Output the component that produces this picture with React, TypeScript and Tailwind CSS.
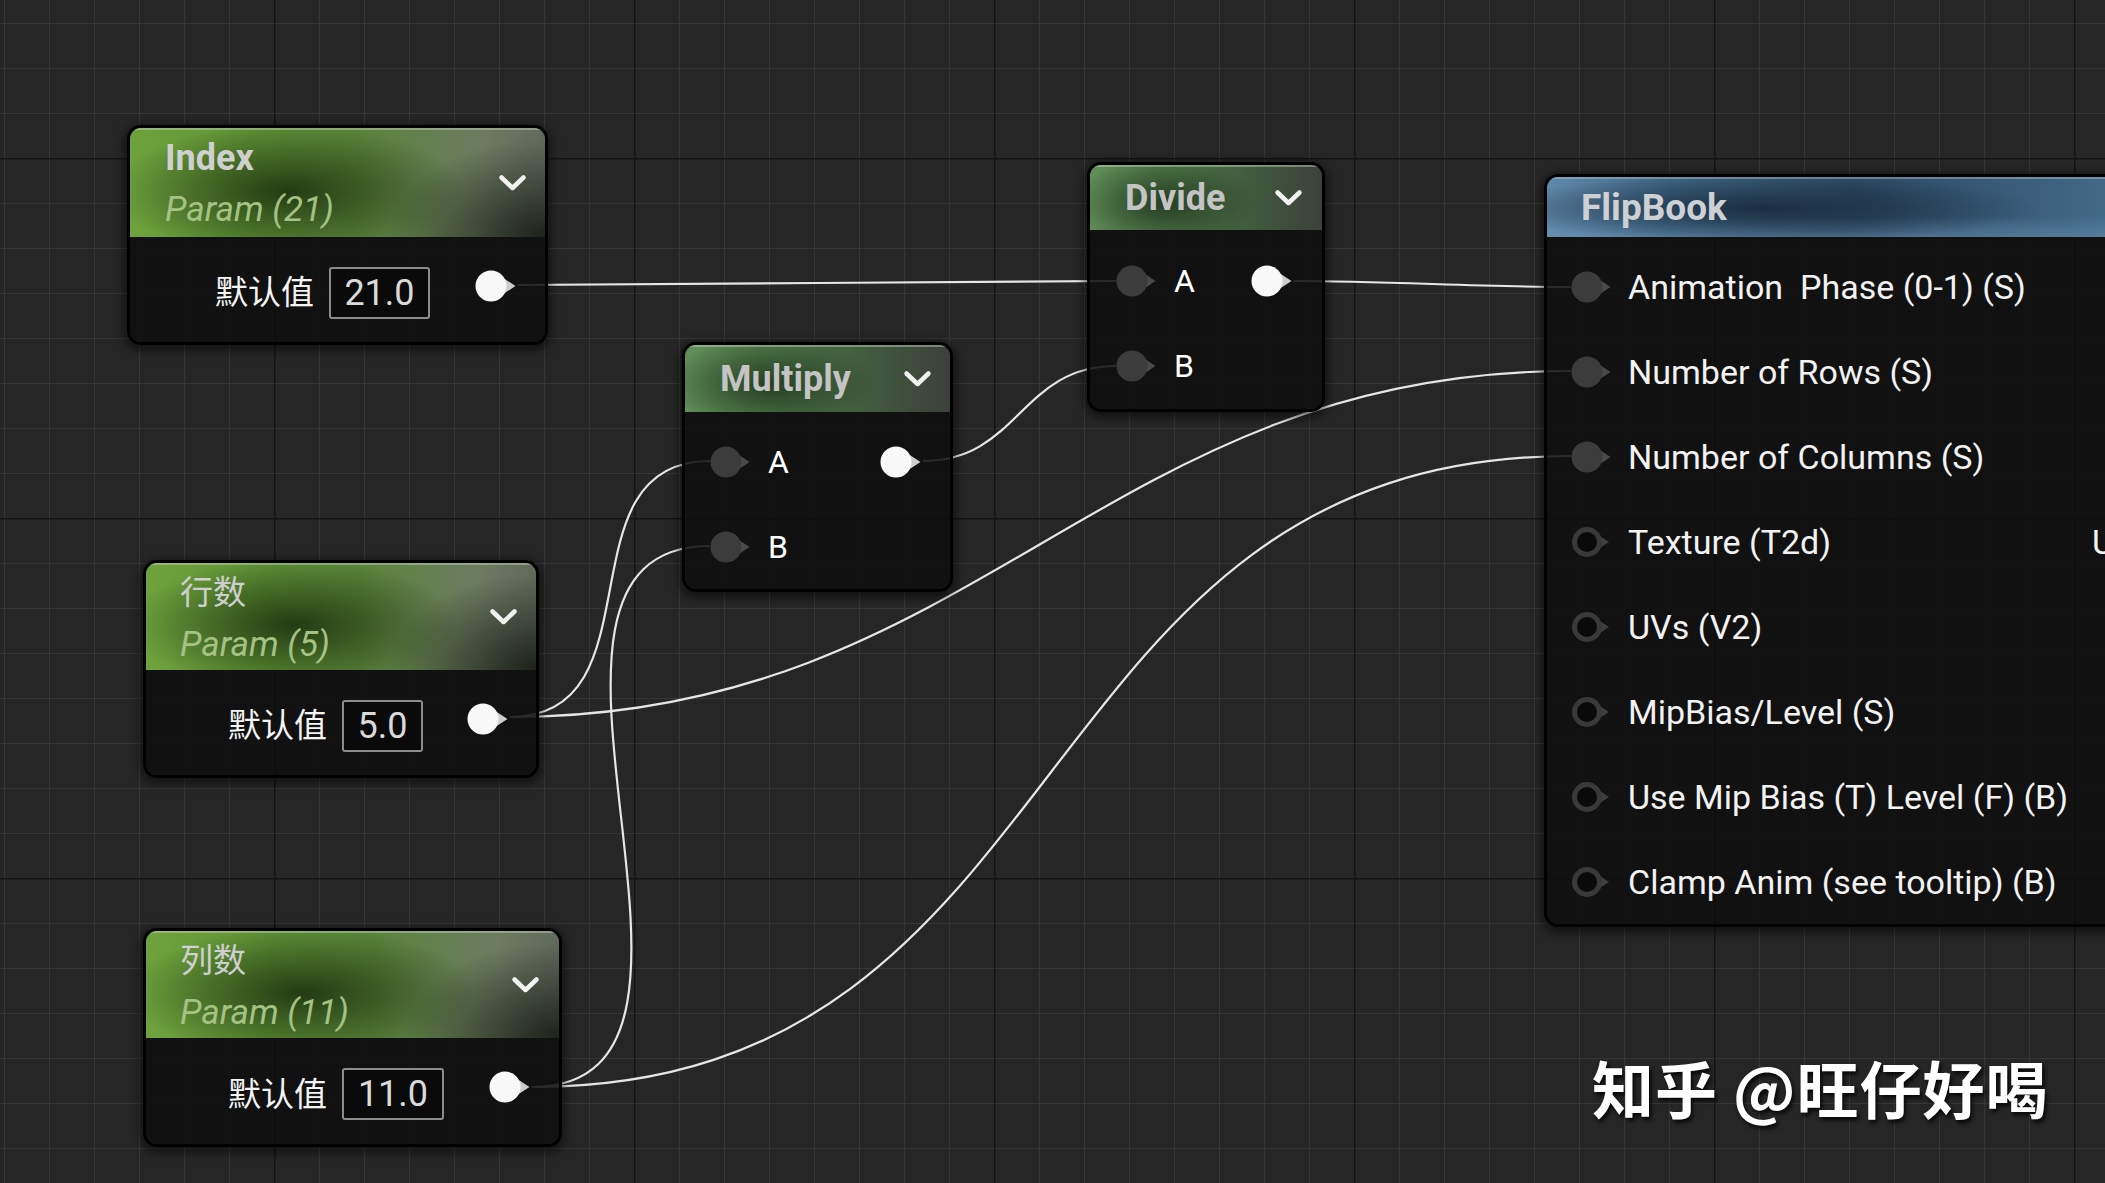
import React from "react";

type Wire = [number, number, number, number];

const wires: Wire[] = [
  [518, 285, 1116, 281],
  [1294, 281, 1571, 287],
  [923, 461, 1116, 366],
  [510, 717, 710, 461],
  [510, 717, 1571, 371],
  [532, 1087, 710, 546],
  [532, 1087, 1571, 456],
];

function wirePath([x0, y0, x1, y1]: Wire) {
  const t = (Math.abs(x1 - x0) + Math.abs(y1 - y0)) / 3;
  return `M${x0} ${y0} C${x0 + t} ${y0} ${x1 - t} ${y1} ${x1} ${y1}`;
}

function Pin({ kind }: { kind: "out" | "in" | "empty" }) {
  if (kind === "out") {
    return (
      <svg width="43" height="32" viewBox="0 0 43 32" className="block shrink-0">
        <polygon points="29,8.5 40.5,16 29,23.5" fill="#cdcdcd" />
        <circle cx="16" cy="16" r="15.5" fill="#f8f8f8" />
      </svg>
    );
  }
  if (kind === "in") {
    return (
      <svg width="43" height="32" viewBox="0 0 43 32" className="block shrink-0">
        <polygon points="29,9 39.5,16 29,23" fill="#4a4a4a" />
        <circle cx="16" cy="16" r="15.5" fill="#3c3c3c" />
      </svg>
    );
  }
  return (
    <svg width="43" height="32" viewBox="0 0 43 32" className="block shrink-0">
      <polygon points="29,10 38,16 29,22" fill="#3e3e3e" />
      <circle cx="16" cy="16" r="12.5" fill="#0a0a0a" stroke="#393939" strokeWidth="5" />
    </svg>
  );
}

function Chevron() {
  return (
    <svg width="29" height="18" viewBox="0 0 29 18" className="block shrink-0">
      <polyline
        points="3.5,3.5 14.5,14 25.5,3.5"
        fill="none"
        stroke="#f2f2f2"
        strokeWidth="4.5"
        strokeLinecap="round"
        strokeLinejoin="round"
      />
    </svg>
  );
}

const greenHeader =
  "[background-image:radial-gradient(ellipse_42%_62%_at_38%_58%,rgba(30,52,16,0.92),rgba(30,52,16,0)_100%),radial-gradient(ellipse_38%_90%_at_100%_100%,rgba(24,28,22,0.92),rgba(24,28,22,0)_100%),linear-gradient(to_right,#6ea23d_0%,#5f9335_30%,#5a853b_55%,#6c7b61_85%,#62695c_100%)]";

const opHeader =
  "[background-image:radial-gradient(ellipse_40%_70%_at_32%_58%,rgba(32,54,30,0.9),rgba(32,54,30,0)_100%),linear-gradient(to_right,#62905a_0%,#4f7a48_35%,#425e3f_65%,#3d403b_100%)]";

const blueHeader =
  "[background-image:radial-gradient(ellipse_45%_55%_at_35%_52%,rgba(24,42,60,0.9),rgba(24,42,60,0)_100%),linear-gradient(to_bottom,rgba(110,150,185,0)_65%,rgba(110,150,185,0.45)_100%),linear-gradient(to_right,#6088aa_0%,#3e6583_20%,#2c4964_50%,#3c607e_80%,#4a7291_100%)]";

const nodeShell =
  "absolute flex flex-col overflow-hidden rounded-[14px] border-[3px] border-black shadow-[0_3px_10px_3px_rgba(0,0,0,0.5)]";
const bodyBg = "bg-[rgba(14,14,14,0.87)]";
const headerGloss = "shadow-[inset_0_2px_0_rgba(200,215,190,0.45)]";

function ParamNode(props: {
  pos: string;
  headerH: string;
  titlePl: string;
  title: string;
  cjk?: boolean;
  sub: string;
  chevMr: string;
  bodyPl: string;
  bodyPr: string;
  boxW: string;
  value: string;
}) {
  return (
    <div className={`${nodeShell} ${props.pos}`}>
      <div className={`flex shrink-0 ${props.headerH} ${greenHeader} ${headerGloss}`}>
        <div className={`flex flex-col pt-[10px] ${props.titlePl}`}>
          {props.cjk ? (
            <div className="text-[33px] leading-[40px] text-[#cfcfcf]">{props.title}</div>
          ) : (
            <div className="text-[36px] font-bold leading-[40px] text-[#d0d0d0]">{props.title}</div>
          )}
          <div className="mt-[12px] text-[35px] italic leading-[40px] text-[#a3c283]">{props.sub}</div>
        </div>
        <div className={`ml-auto self-center ${props.chevMr}`}>
          <Chevron />
        </div>
      </div>
      <div className={`flex flex-1 items-center ${bodyBg} ${props.bodyPl} ${props.bodyPr}`}>
        <span className="mt-[6px] text-[33px] leading-none text-[#f4f4f4]">默认值</span>
        <div
          className={`ml-[15px] mt-[6px] flex h-[52px] items-center justify-center rounded-[3px] border-2 border-[#8c8c8c] bg-[#0a0a0a] text-[36px] leading-none text-[#dadada] ${props.boxW}`}
        >
          {props.value}
        </div>
        <div className="mb-[8px] ml-auto">
          <Pin kind="out" />
        </div>
      </div>
    </div>
  );
}

function OpNode(props: {
  pos: string;
  headerH: string;
  title: string;
  pt: string;
  pl: string;
  pr: string;
  chevMr: string;
}) {
  return (
    <div className={`${nodeShell} ${props.pos}`}>
      <div className={`flex shrink-0 items-center pl-[35px] ${props.headerH} ${props.chevMr} ${opHeader} ${headerGloss}`}>
        <span className="text-[36px] font-bold leading-none text-[#c4c4c4]">{props.title}</span>
        <div className="ml-auto">
          <Chevron />
        </div>
      </div>
      <div className={`flex flex-1 flex-col ${bodyBg} ${props.pt}`}>
        <div className={`flex h-[85px] items-center ${props.pl} ${props.pr}`}>
          <Pin kind="in" />
          <span className="ml-[15px] text-[32px] leading-none text-white">A</span>
          <div className="ml-auto">
            <Pin kind="out" />
          </div>
        </div>
        <div className={`flex h-[85px] items-center ${props.pl}`}>
          <Pin kind="in" />
          <span className="ml-[15px] text-[32px] leading-none text-white">B</span>
        </div>
      </div>
    </div>
  );
}

const flipRows: { label: string; kind: "in" | "empty"; extra?: string }[] = [
  { label: "Animation  Phase (0-1) (S)", kind: "in" },
  { label: "Number of Rows (S)", kind: "in" },
  { label: "Number of Columns (S)", kind: "in" },
  { label: "Texture (T2d)", kind: "empty", extra: "UVs" },
  { label: "UVs (V2)", kind: "empty" },
  { label: "MipBias/Level (S)", kind: "empty" },
  { label: "Use Mip Bias (T) Level (F) (B)", kind: "empty" },
  { label: "Clamp Anim (see tooltip) (B)", kind: "empty" },
];

export default function App() {
  return (
    <div className="relative h-[1183px] w-[2105px] overflow-hidden bg-[#262626] font-['Roboto','Noto_Sans_CJK_SC',sans-serif]">
      <svg className="absolute inset-0" width="2105" height="1183" viewBox="0 0 2105 1183">
        <defs>
          <pattern id="minor" x="4" y="23" width="45" height="45" patternUnits="userSpaceOnUse">
            <path d="M0.5 0 V45 M0 0.5 H45" stroke="#363636" strokeWidth="1" fill="none" />
          </pattern>
          <pattern id="major" x="274" y="158" width="360" height="360" patternUnits="userSpaceOnUse">
            <path d="M0.75 0 V360 M0 0.75 H360" stroke="#141414" strokeWidth="1.5" fill="none" />
          </pattern>
        </defs>
        <rect x="0" y="0" width="2105" height="1183" fill="url(#minor)" />
        <rect x="0" y="0" width="2105" height="1183" fill="url(#major)" />
        {wires.map((w, i) => (
          <path key={i} d={wirePath(w)} fill="none" stroke="#e6e6e6" strokeWidth="2.2" />
        ))}
      </svg>

      <ParamNode
        pos="left-[127px] top-[125px] w-[421px] h-[220px]"
        headerH="h-[109px]"
        titlePl="pl-[35px]"
        title="Index"
        sub="Param (21)"
        chevMr="mr-[18px]"
        bodyPl="pl-[85px]"
        bodyPr="pr-[27px]"
        boxW="w-[101px]"
        value="21.0"
      />
      <ParamNode
        pos="left-[143px] top-[560px] w-[396px] h-[218px]"
        headerH="h-[107px]"
        titlePl="pl-[34px]"
        title="行数"
        cjk
        sub="Param (5)"
        chevMr="mr-[18px]"
        bodyPl="pl-[82px]"
        bodyPr="pr-[26px]"
        boxW="w-[81px]"
        value="5.0"
      />
      <ParamNode
        pos="left-[143px] top-[928px] w-[419px] h-[219px]"
        headerH="h-[107px]"
        titlePl="pl-[34px]"
        title="列数"
        cjk
        sub="Param (11)"
        chevMr="mr-[19px]"
        bodyPl="pl-[82px]"
        bodyPr="pr-[27px]"
        boxW="w-[102px]"
        value="11.0"
      />

      <OpNode
        pos="left-[682px] top-[342px] w-[271px] h-[250px]"
        headerH="h-[67px]"
        title="Multiply"
        pt="pt-[7px]"
        pl="pl-[25px]"
        pr="pr-[27px]"
        chevMr="pr-[18px]"
      />
      <OpNode
        pos="left-[1087px] top-[162px] w-[238px] h-[250px]"
        headerH="h-[65px]"
        title="Divide"
        pt="pt-[8px]"
        pl="pl-[26px]"
        pr="pr-[28px]"
        chevMr="pr-[19px]"
      />

      <div className={`${nodeShell} left-[1544px] top-[174px] w-[623px] h-[753px]`}>
        <div className={`flex h-[60px] shrink-0 items-center pl-[34px] ${blueHeader} shadow-[inset_0_2px_0_rgba(170,195,215,0.45)]`}>
          <span className="text-[37px] font-bold leading-none text-[#cdd1d4]">FlipBook</span>
        </div>
        <div className={`flex flex-1 flex-col pt-[7px] ${bodyBg}`}>
          {flipRows.map((r) => (
            <div key={r.label} className="flex h-[85px] items-center pl-[24px]">
              <Pin kind={r.kind} />
              <span className="ml-[14px] flex-1 whitespace-pre text-[34px] leading-none text-[#f2f2f2]">{r.label}</span>
              <span className="w-[72px] text-[34px] leading-none text-[#f2f2f2]">{r.extra ?? ""}</span>
            </div>
          ))}
        </div>
      </div>

      <div className="absolute left-[1592px] top-[1056px] whitespace-pre text-[62px] font-bold leading-none tracking-[1px] text-white font-['Noto_Sans_CJK_SC',sans-serif] [text-shadow:2px_3px_4px_rgba(0,0,0,0.85)]">
        知乎 @旺仔好喝
      </div>
    </div>
  );
}
